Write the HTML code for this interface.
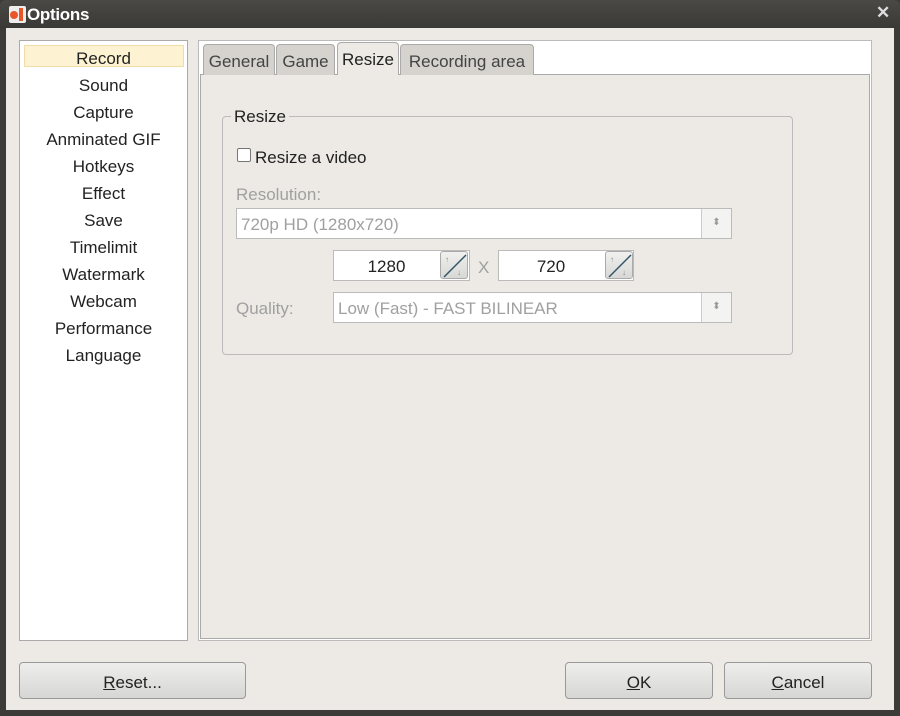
<!DOCTYPE html>
<html><head><style>
*{box-sizing:border-box;margin:0;padding:0}
body{width:900px;height:716px;background:#3c3b37;font-family:"Liberation Sans","Noto Sans CJK KR",sans-serif;position:relative;overflow:hidden;color:#222}
.a{position:absolute}
#title{left:0;top:0;width:900px;height:28px;background:linear-gradient(#4a4945,#3a3935);border-radius:6px 6px 0 0}
#client{left:6px;top:28px;width:888px;height:682px;background:#edeae5}
.list{left:19px;top:40px;width:169px;height:601px;background:#fff;border:1px solid #aaa}
.item{position:absolute;left:0;width:167px;text-align:center;font-size:17px;line-height:22px}
.tabs{left:198px;top:40px;width:674px;height:601px;background:#fff;border:1px solid #bbb}
.pane{left:200px;top:74px;width:670px;height:565px;background:#edeae5;border:1px solid #aaa}
.tab{position:absolute;top:44px;height:31px;background:#d6d3cf;border:1px solid #aaa;border-bottom:none;border-radius:4px 4px 0 0;font-size:17px;line-height:33px;text-align:center;color:#444}
.btn{position:absolute;top:662px;height:37px;border:1px solid #999;border-radius:4px;background:linear-gradient(#eeeeec,#d6d6d4);font-size:17px;line-height:40px;text-align:center;color:#222}
.field{position:absolute;background:#fff;border:1px solid #bbb;font-size:17px;color:#a0a0a0;line-height:31px}
.spin{position:absolute;right:0;top:0;width:30px;height:100%;border-left:1px solid #ccc;background:#f3f3f1;font-size:10px;text-align:center;color:#999;line-height:28px}
.sb{position:absolute;width:28px;height:28px;border:1px solid #aaa;border-radius:3px;background:linear-gradient(#f0f0ee,#d8d8d6)}
</style></head><body>
<div class="a" id="title"></div>
<div class="a" style="left:9px;top:6px;width:17px;height:17px;background:#eee;border-radius:2px"></div>
<div class="a" style="left:10px;top:11px;width:8px;height:8px;background:#e8572a;border-radius:50%"></div>
<div class="a" style="left:19px;top:8px;width:4px;height:13px;background:#e8572a"></div>
<div class="a" style="left:27px;top:5px;color:#fff;font-weight:bold;font-size:17px;letter-spacing:-0.3px">Options</div>
<div class="a" style="left:876px;top:3px;color:#ddd;font-weight:bold;font-size:17px">✕</div>
<div class="a" id="client"></div>
<div class="a list">
<div class="a" style="left:4px;top:4px;width:160px;height:22px;background:#fdf3d2;border:1px solid #f1dca8"></div>
<div class="item" style="top:7px">Record</div>
<div class="item" style="top:34px">Sound</div>
<div class="item" style="top:61px">Capture</div>
<div class="item" style="top:88px">Anminated GIF</div>
<div class="item" style="top:115px">Hotkeys</div>
<div class="item" style="top:142px">Effect</div>
<div class="item" style="top:169px">Save</div>
<div class="item" style="top:196px">Timelimit</div>
<div class="item" style="top:223px">Watermark</div>
<div class="item" style="top:250px">Webcam</div>
<div class="item" style="top:277px">Performance</div>
<div class="item" style="top:304px">Language</div>
</div>
<div class="a tabs"></div>
<div class="a pane"></div>
<div class="tab" style="left:203px;width:72px">General</div>
<div class="tab" style="left:276px;width:59px">Game</div>
<div class="tab" style="left:337px;top:42px;height:33px;width:62px;background:#edeae5;color:#222">Resize</div>
<div class="tab" style="left:400px;width:134px">Recording area</div>
<div class="a" style="left:222px;top:116px;width:571px;height:239px;border:1px solid #bbb;border-radius:4px"></div>
<div class="a" style="left:231px;top:107px;background:#edeae5;padding:0 3px;font-size:17px">Resize</div>
<div class="a" style="left:237px;top:148px;width:14px;height:14px;border:1px solid #777;border-radius:2px;background:#fff"></div>
<div class="a" style="left:255px;top:148px;font-size:17px">Resize a video</div>
<div class="a" style="left:236px;top:185px;font-size:17px;color:#a0a0a0">Resolution:</div>
<div class="field" style="left:236px;top:208px;width:496px;height:31px;padding-left:4px">720p HD (1280x720)<div class="spin">⬍</div></div>
<div class="field" style="left:333px;top:250px;width:137px;height:31px;text-align:center;padding-right:30px;color:#222">1280</div>
<div class="sb" style="left:440px;top:251px"><svg width="26" height="26"><line x1="3" y1="25" x2="25" y2="3" stroke="#356" stroke-width="1.5"/><text x="4" y="10" font-size="8" fill="#888">↑</text><text x="16" y="23" font-size="8" fill="#888">↓</text></svg></div>
<div class="a" style="left:478px;top:258px;font-size:17px;color:#a0a0a0">X</div>
<div class="field" style="left:498px;top:250px;width:136px;height:31px;text-align:center;padding-right:30px;color:#222">720</div>
<div class="sb" style="left:605px;top:251px"><svg width="26" height="26"><line x1="3" y1="25" x2="25" y2="3" stroke="#356" stroke-width="1.5"/><text x="4" y="10" font-size="8" fill="#888">↑</text><text x="16" y="23" font-size="8" fill="#888">↓</text></svg></div>
<div class="a" style="left:236px;top:299px;font-size:17px;color:#a0a0a0">Quality:</div>
<div class="field" style="left:333px;top:292px;width:399px;height:31px;padding-left:4px">Low (Fast) - FAST BILINEAR<div class="spin">⬍</div></div>
<div class="btn" style="left:19px;width:227px"><u>R</u>eset...</div>
<div class="btn" style="left:565px;width:148px"><u>O</u>K</div>
<div class="btn" style="left:724px;width:148px"><u>C</u>ancel</div>
</body></html>
